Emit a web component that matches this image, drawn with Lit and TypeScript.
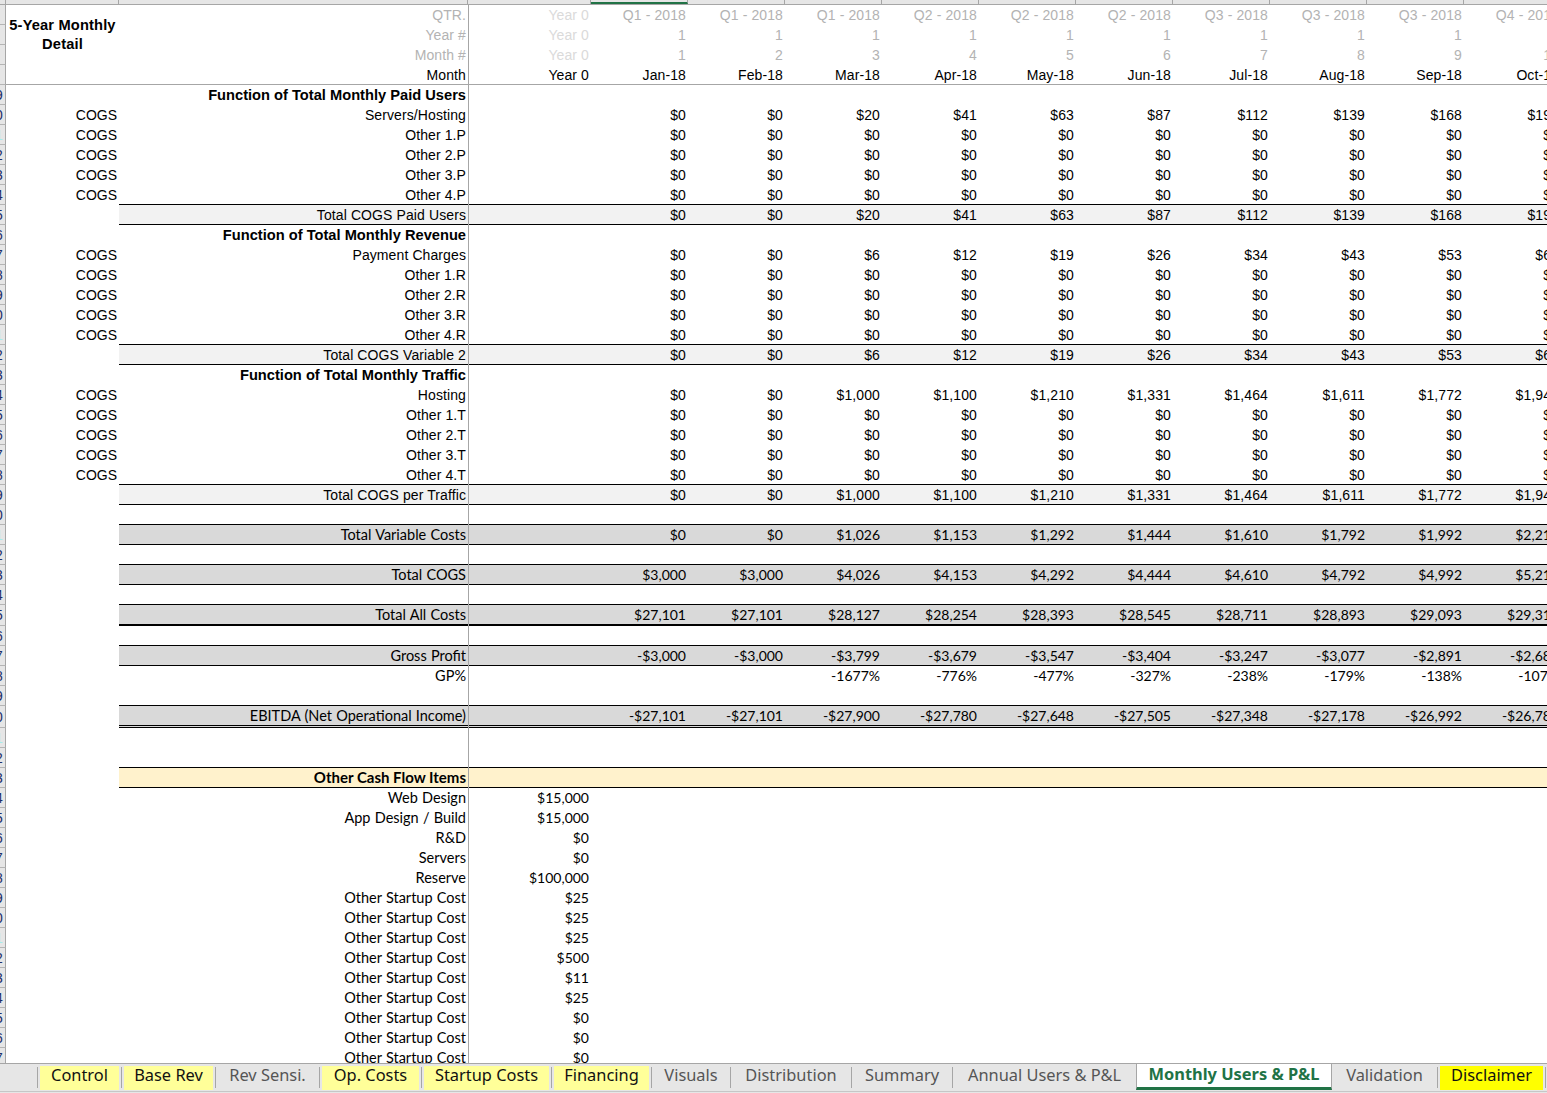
import { LitElement, html, css, nothing } from "lit";
import { customElement } from "lit/decorators.js";

type Kind = "plain" | "fn" | "light" | "dark" | "darkThick" | "darkDouble" | "cream" | "blank";
interface Row {
  kind: Kind;
  a?: string;
  b?: string;
  c?: string;
  vals?: string[];
  narrow?: boolean;
}

const money = (n: number) => (n < 0 ? "-$" : "$") + Math.abs(n).toLocaleString("en-US");
const list = (ns: number[]) => ns.map(money);
const zeros = list([0, 0, 0, 0, 0, 0, 0, 0, 0, 0]);

const servers = list([0, 0, 20, 41, 63, 87, 112, 139, 168, 198]);
const payments = list([0, 0, 6, 12, 19, 26, 34, 43, 53, 63]);
const hosting = list([0, 0, 1000, 1100, 1210, 1331, 1464, 1611, 1772, 1949]);

const section = (title: string, first: string, suffix: string, total: string, vals: string[]): Row[] => [
  { kind: "fn", b: title },
  { kind: "plain", a: "COGS", b: first, vals },
  ...[1, 2, 3, 4].map((i): Row => ({ kind: "plain", a: "COGS", b: `Other ${i}.${suffix}`, vals: zeros })),
  { kind: "light", b: total, vals },
];

const startup = [25, 25, 25, 500, 11, 25, 0, 0, 0];

const ROWS: Row[] = [
  ...section("Function of Total Monthly Paid Users", "Servers/Hosting", "P", "Total COGS Paid Users", servers),
  ...section("Function of Total Monthly Revenue", "Payment Charges", "R", "Total COGS Variable 2", payments),
  ...section("Function of Total Monthly Traffic", "Hosting", "T", "Total COGS per Traffic", hosting),
  { kind: "blank" },
  { kind: "dark", narrow: true, b: "Total Variable Costs", vals: list([0, 0, 1026, 1153, 1292, 1444, 1610, 1792, 1992, 2210]) },
  { kind: "blank" },
  { kind: "dark", narrow: true, b: "Total COGS", vals: list([3000, 3000, 4026, 4153, 4292, 4444, 4610, 4792, 4992, 5210]) },
  { kind: "blank" },
  { kind: "darkThick", narrow: true, b: "Total All Costs", vals: list([27101, 27101, 28127, 28254, 28393, 28545, 28711, 28893, 29093, 29311]) },
  { kind: "blank" },
  { kind: "dark", narrow: true, b: "Gross Profit", vals: list([-3000, -3000, -3799, -3679, -3547, -3404, -3247, -3077, -2891, -2681]) },
  { kind: "plain", narrow: true, b: "GP%", vals: ["", "", "-1677%", "-776%", "-477%", "-327%", "-238%", "-179%", "-138%", "-107%"] },
  { kind: "blank" },
  { kind: "darkDouble", narrow: true, b: "EBITDA (Net Operational Income)", vals: list([-27101, -27101, -27900, -27780, -27648, -27505, -27348, -27178, -26992, -26781]) },
  { kind: "blank" },
  { kind: "blank" },
  { kind: "cream", narrow: true, b: "Other Cash Flow Items" },
  { kind: "plain", narrow: true, b: "Web Design", c: "$15,000" },
  { kind: "plain", narrow: true, b: "App Design / Build", c: "$15,000" },
  { kind: "plain", narrow: true, b: "R&D", c: "$0" },
  { kind: "plain", narrow: true, b: "Servers", c: "$0" },
  { kind: "plain", narrow: true, b: "Reserve", c: "$100,000" },
  ...startup.map((n): Row => ({ kind: "plain", narrow: true, b: "Other Startup Cost", c: money(n) })),
];

const QTRS = ["Q1", "Q1", "Q1", "Q2", "Q2", "Q2", "Q3", "Q3", "Q3", "Q4"].map((q) => `${q} - 2018`);
const MONTHS = ["Jan", "Feb", "Mar", "Apr", "May", "Jun", "Jul", "Aug", "Sep", "Oct"].map((m) => `${m}-18`);
const HEAD = [
  { b: "QTR.", vals: QTRS, dim: true },
  { b: "Year #", vals: QTRS.map(() => "1"), dim: true },
  { b: "Month #", vals: MONTHS.map((_, i) => String(i + 1)), dim: true },
  { b: "Month", vals: MONTHS, dim: false },
];

const TABS = [
  { label: "Control", w: 84, fill: "soft" },
  { label: "Base Rev", w: 94, fill: "soft" },
  { label: "Rev Sensi.", w: 104, fill: "" },
  { label: "Op. Costs", w: 102, fill: "soft" },
  { label: "Startup Costs", w: 130, fill: "soft" },
  { label: "Financing", w: 100, fill: "soft" },
  { label: "Visuals", w: 79, fill: "" },
  { label: "Distribution", w: 121, fill: "" },
  { label: "Summary", w: 101, fill: "" },
  { label: "Annual Users & P&L", w: 184, fill: "" },
  { label: "Monthly Users & P&L", w: 196, fill: "", active: true },
  { label: "Validation", w: 105, fill: "", noSep: true },
  { label: "Disclaimer", w: 108, fill: "strong" },
];

@customElement("app-root")
export class AppRoot extends LitElement {
  static styles = css`
    :host {
      display: flex;
      flex-direction: column;
      width: 100%;
      height: 1093px;
      overflow: hidden;
      background: #fff;
      color: #000;
      font-family: "Liberation Sans", Arial, sans-serif;
      font-size: 14px;
      letter-spacing: 0.1px;
    }
    .colhead {
      flex: none;
      display: flex;
      height: 5px;
      box-sizing: border-box;
      background: #e6e6e6;
      border-bottom: 1px solid #a6a6a6;
      overflow: hidden;
    }
    .colhead i {
      flex: none;
      box-sizing: border-box;
      height: 4px;
      border-right: 1px solid #a6a6a6;
    }
    .colhead .cg { width: 6px; }
    .colhead .ca { width: 113px; }
    .colhead .cb { width: 349px; }
    .colhead .cc { width: 123px; }
    .colhead .cd { width: 97px; }
    .colhead .sel { border-bottom: 2px solid #217346; }

    .sheet {
      flex: 1;
      min-height: 0;
      overflow: hidden;
      position: relative;
    }
    .vline {
      position: absolute;
      left: 468px;
      top: 0;
      bottom: 0;
      width: 1px;
      background: #a6a6a6;
    }

    .gut {
      flex: none;
      width: 6px;
      box-sizing: border-box;
      background: #e6e6e6;
      border-right: 1px solid #a6a6a6;
      border-bottom: 1px solid #b4b4b4;
      padding-right: 2px;
      display: flex;
      justify-content: flex-end;
      align-items: center;
      overflow: hidden;
      white-space: nowrap;
      color: #1c2f6b;
    }
    .gut.one { color: #a5ecec; }

    .head { display: flex; height: 80px; }
    .head-gut { flex: none; display: flex; flex-direction: column; }
    .head-gut .gut { height: 20px; }
    .title {
      flex: none;
      width: 113px;
      box-sizing: border-box;
      height: 80px;
      padding-top: 11px;
      border-bottom: 1px solid #a6a6a6;
      font-weight: 700;
      font-size: 14.67px;
      letter-spacing: 0.15px;
      line-height: 19px;
      text-align: center;
      white-space: nowrap;
    }
    .head-rows { flex: 1; min-width: 0; border-bottom: 1px solid #a6a6a6; box-sizing: border-box; height: 80px; }

    .row { display: flex; height: 20px; }
    .cola {
      flex: none;
      width: 113px;
      box-sizing: border-box;
      padding-right: 2px;
      display: flex;
      align-items: center;
      justify-content: flex-end;
      letter-spacing: 0;
    }
    .band {
      flex: 1;
      min-width: 0;
      box-sizing: border-box;
      display: flex;
      overflow: hidden;
    }
    .head .band { height: 20px; }
    .head .band.last { height: 19px; }
    .cell {
      flex: none;
      box-sizing: border-box;
      width: 97px;
      padding-right: 3px;
      display: flex;
      align-items: center;
      justify-content: flex-end;
      white-space: nowrap;
    }
    .cell.b { width: 349px; padding-right: 2px; }
    .cell.c { width: 124px; }

    .dim .cell { color: #b3b3b3; }
    .dim .cell.c { color: #dadada; }

    .fn .cell.b { font-weight: 700; font-size: 14.67px; letter-spacing: 0; }
    .light .band { background: #f2f2f2; border-bottom: 1px solid #000; box-shadow: 0 -1px 0 #000; }
    .dark .band { background: #d9d9d9; border-bottom: 1px solid #000; box-shadow: 0 -1px 0 #000; }
    .cream .band { background: #fff2cc; border-bottom: 1px solid #000; box-shadow: 0 -1px 0 #000; }
    .darkThick { height: 21px; }
    .darkThick .band { background: #d9d9d9; border-bottom: 2px solid #000; box-shadow: 0 -1px 0 #000; }
    .darkDouble { height: 22px; }
    .darkDouble .band { background: #d9d9d9; border-bottom: 3px double #000; box-shadow: 0 -1px 0 #000; }

    .narrow .band { font-family: Lato, "Liberation Sans", sans-serif; font-size: 14px; letter-spacing: 0; }
    .narrow .cell { padding-bottom: 2px; }
    .narrow.dark .cell,
    .narrow.darkThick .cell,
    .narrow.darkDouble .cell,
    .narrow.cream .cell { padding-bottom: 1px; }
    .narrow .cell.b { font-size: 14.5px; word-spacing: 0.5px; }
    .cream .cell.b { font-weight: 700; font-size: 15px; word-spacing: 0; }

    .foot { flex: none; background: #e6e6e6; padding-bottom: 1px; }
    .tabs {
      display: flex;
      box-sizing: border-box;
      height: 29px;
      padding-left: 37px;
      border-top: 1px solid #a6a6a6;
      border-bottom: 1px solid #c6c6c6;
      font-family: "Noto Sans", "Open Sans", sans-serif;
      font-size: 16.4px;
      letter-spacing: 0;
      color: #555;
    }
    .tab { flex: none; display: flex; box-sizing: border-box; align-items: stretch; }
    .sep { flex: none; width: 1px; margin: 3px 0 3px; background: #a6a6a6; }
    .fill {
      flex: 1;
      min-width: 0;
      margin: 2px 2px 1px;
      display: flex;
      align-items: center;
      justify-content: center;
      padding-bottom: 8px;
      box-sizing: border-box;
      white-space: nowrap;
    }
    .fill.soft { background: #ffff99; color: #111; }
    .fill.strong { background: #ffff00; color: #111; }
    .tab.active {
      background: #fff;
      margin-top: -1px;
      height: 27px;
      border: 1px solid #a6a6a6;
      border-bottom: 3px solid #217346;
      color: #217346;
      font-weight: 700;
    }
    .tab.active .fill { margin: 0; padding-bottom: 4px; }
  `;

  private gutter(n: number | null) {
    const one = n !== null && n % 10 === 1;
    return html`<div class="gut ${one ? "one" : ""}">${n ?? nothing}</div>`;
  }

  private cells(b: string, c: string, vals: string[]) {
    return html`<div class="cell b">${b}</div>
      <div class="cell c">${c}</div>
      ${vals.map((v) => html`<div class="cell">${v}</div>`)}`;
  }

  render() {
    return html`
      <div class="colhead">
        <i class="cg"></i><i class="ca"></i><i class="cb"></i><i class="cc"></i>
        ${MONTHS.map((_, i) => html`<i class="cd ${i === 0 ? "sel" : ""}"></i>`)}
      </div>
      <div class="sheet">
        <div class="head">
          <div class="head-gut">${HEAD.map(() => this.gutter(null))}</div>
          <div class="title">5-Year Monthly<br />Detail</div>
          <div class="head-rows">
            ${HEAD.map(
              (h, i) => html`<div class="band ${h.dim ? "dim" : ""} ${i === 3 ? "last" : ""}">
                ${this.cells(h.b, "Year 0", h.vals)}
              </div>`,
            )}
          </div>
        </div>
        ${ROWS.map(
          (r, i) => html`<div class="row ${r.kind} ${r.narrow ? "narrow" : ""}">
            ${this.gutter(209 + i)}
            <div class="cola">${r.a ?? ""}</div>
            <div class="band">${this.cells(r.b ?? "", r.c ?? "", r.vals ?? [])}</div>
          </div>`,
        )}
        <div class="vline"></div>
      </div>
      <div class="foot">
        <div class="tabs">
          ${TABS.map(
            (t) => html`<div class="tab ${t.active ? "active" : ""}" style="width:${t.w}px">
              ${t.active || t.noSep ? nothing : html`<i class="sep"></i>`}
              <div class="fill ${t.fill}">${t.label}</div>
            </div>`,
          )}
          <i class="sep"></i>
        </div>
      </div>
    `;
  }
}
